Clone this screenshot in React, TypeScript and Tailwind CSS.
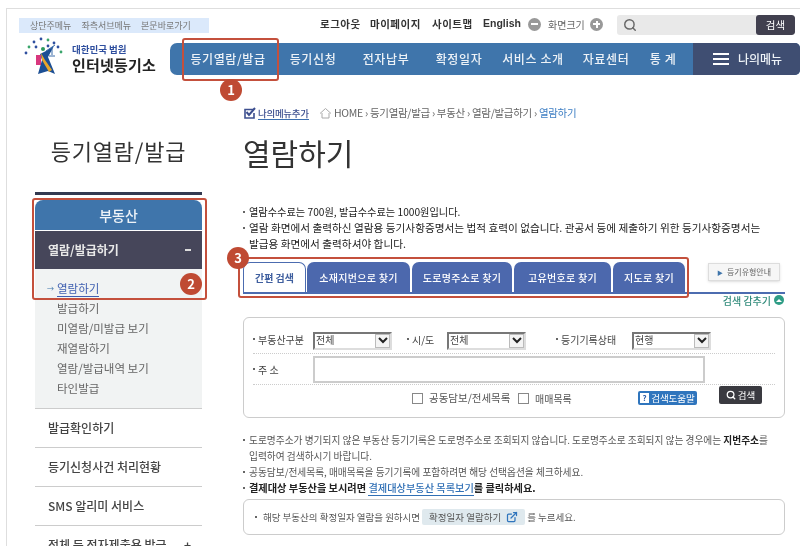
import React from "react";
import { Search, ExternalLink } from "lucide-react";

const F = '"Noto Sans CJK KR","Noto Sans",sans-serif';

function Logo() {
  return (
    <svg width="42" height="42" viewBox="0 0 42 42" className="shrink-0">
      {[[2,17],[5,11],[10,6],[17,3],[24,4],[30,7],[34,11],[37,16],[12,11],[24,10]].map(([x,y],i)=>(
        <circle key={i} cx={x} cy={y} r="1.4" fill={i%3===1?"#3aa56b":"#2f4f9f"} />
      ))}
      <path d="M14 38 L18 24 L16 18 L22 15 L30 10 L24 21 L31 38 L24 35 Z" fill="#1c4f94" />
      <path d="M17 17 L21 24 L28 34 L25 36 L18 24 Z" fill="#e8a62c" />
      <rect x="12" y="19" width="5" height="10" fill="#d8377e" />
      <circle cx="19" cy="13" r="2" fill="#2e9b5f" />
      <path d="M22 15 L31 9 M28 11 V19 M25 20 h6" stroke="#3a6aa8" strokeWidth="1" fill="none" />
    </svg>
  );
}

function Chevron() {
  return (
    <span className="flex h-[14px] w-[15px] items-center justify-center border border-[#bbb] bg-[#f4f4f4]">
      <svg width="10" height="7" viewBox="0 0 10 7"><path d="M1 1l4 4 4-4" stroke="#222" strokeWidth="2" fill="none" /></svg>
    </span>
  );
}

function Sel({ v }: { v: string }) {
  return (
    <div className="flex h-[18px] w-[79px] justify-between border-2 border-b-[#ddd] border-l-[#777] border-r-[#ddd] border-t-[#777] bg-white pl-[1px] text-[10px] leading-[12px] text-[#444]">
      <span>{v}</span>
      <Chevron />
    </div>
  );
}

const Label = ({ t, w }: { t: string; w: string }) => (
  <div className={`${w} flex items-center text-[10px] text-[#444]`}>
    <span className="mr-[3px] h-[2px] w-[2px] rounded-full bg-[#333]" />
    {t}
  </div>
);

const Badge = ({ n, c }: { n: string; c: string }) => (
  <div className={`absolute ${c} z-20 flex h-[22px] w-[22px] items-center justify-center rounded-full bg-[#bf4a33] text-[13px] font-bold text-white`}>{n}</div>
);

const Bullet = ({ children, className = "" }: { children: React.ReactNode; className?: string }) => (
  <div className={`flex ${className}`}>
    <span className="mr-[4px] mt-[7px] h-[2px] w-[2px] shrink-0 rounded-full bg-[#333]" />
    <div>{children}</div>
  </div>
);

export default function App() {
  const nav: [string, string][] = [
    ["등기열람/발급", "w-[92px]"],
    ["등기신청", "w-[78px]"],
    ["전자납부", "w-[68px]"],
    ["확정일자", "w-[78px]"],
    ["서비스 소개", "w-[70px]"],
    ["자료센터", "w-[76px]"],
    ["통 계", "w-[38px]"],
  ];
  const tabs: [string, string][] = [
    ["소재지번으로 찾기", "w-[103px] ml-[1px]"],
    ["도로명주소로 찾기", "w-[100px] ml-[2px]"],
    ["고유번호로 찾기", "w-[97px] ml-[2px]"],
    ["지도로 찾기", "w-[72px] ml-[2px]"],
  ];
  const sub = ["발급하기", "미열람/미발급 보기", "재열람하기", "열람/발급내역 보기", "타인발급"];
  const side = ["발급확인하기", "등기신청사건 처리현황", "SMS 알리미 서비스"];

  return (
    <div className="relative h-[546px] w-[800px] overflow-hidden bg-white blur-[0.5px]" style={{ fontFamily: F }}>
      <div className="ml-[6px] mt-[8px] h-[538px] border-l border-t border-[#dedede]">
        {/* top row */}
        <div className="flex h-[27px] items-start">
          <div className="ml-[12px] mt-[9px] flex h-[15px] w-[190px] items-center gap-[10px] bg-[#dbe9fb] pl-[11px] text-[9px] text-[#777]">
            <span>상단주메뉴</span><span>좌측서브메뉴</span><span>본문바로가기</span>
          </div>
          <div className="ml-[111px] mt-[7px] flex h-[16px] items-center text-[10.5px] font-bold text-[#333]">
            <span className="w-[50px] tracking-[0.5px]">로그아웃</span>
            <span className="w-[62px] tracking-[0.5px]">마이페이지</span>
            <span className="w-[51px] tracking-[0.5px]">사이트맵</span>
            <span className="w-[45px] text-[10.5px]" style={{ fontFamily: '"Liberation Sans",sans-serif' }}>English</span>
            <span className="flex h-[13px] w-[13px] items-center justify-center rounded-full bg-[#999]"><span className="h-[2px] w-[7px] bg-white" /></span>
            <span className="ml-[7px] w-[42px] text-[10px] font-normal text-[#666]">화면크기</span>
            <span className="relative flex h-[13px] w-[13px] items-center justify-center rounded-full bg-[#999]"><span className="h-[2px] w-[7px] bg-white" /><span className="absolute h-[7px] w-[2px] bg-white" /></span>
          </div>
          <div className="ml-[14px] mt-[6px] flex h-[20px] w-[178px] overflow-hidden rounded-[3px] bg-[#e9e9e9]">
            <div className="flex w-[139px] items-center pl-[6px]"><Search size={14} strokeWidth={2.5} className="text-[#666]" /></div>
            <div className="flex w-[39px] items-center justify-center rounded-[3px] bg-[#41404f] text-[10.5px] text-white">검색</div>
          </div>
        </div>

        {/* logo + nav */}
        <div className="flex h-[50px] items-start">
          <div className="ml-[17px] flex w-[146px] shrink-0">
            <Logo />
            <div className="ml-[6px] mt-[7px] flex flex-col whitespace-nowrap">
              <div className="text-[9.5px] font-bold leading-[12px] text-[#2f4f9f]">대한민국 법원</div>
              <div className="text-[15px] font-bold leading-[19px] tracking-[0.2px] text-[#222]">인터넷등기소</div>
            </div>
          </div>
          <div className="mt-[7px] flex h-[32px] w-[630px] shrink-0 overflow-hidden rounded-l-[7px] rounded-r-[5px] bg-[#3f75ab]">
            <div className="flex flex-1 items-center pl-[12px] text-[12px] font-medium tracking-[0.6px] text-[#edf2f7]">
              {nav.map(([t, w]) => (
                <span key={t} className={`${w} text-center`}>{t}</span>
              ))}
            </div>
            <div className="flex w-[107px] items-center bg-[#3f4e72] pl-[20px] text-[12px] font-medium text-[#edf2f7]">
              <span className="mr-[9px] flex w-[16px] flex-col gap-[3px]">
                <i className="h-[2px] bg-white" /><i className="h-[2px] bg-white" /><i className="h-[2px] bg-white" />
              </span>
              나의메뉴
            </div>
          </div>
        </div>

        <div className="flex">
          {/* sidebar */}
          <div className="ml-[28px] w-[167px] shrink-0">
            <div className="mt-[49px] text-center text-[22px] leading-[30px] tracking-[0.8px] text-[#333]">등기열람/발급</div>
            <div className="mt-[27px] h-[3px] bg-[#333a50]" />
            <div className="mt-[5px] flex h-[30px] items-center justify-center rounded-t-[8px] bg-[#3f75ab] text-[14px] font-medium text-[#eef3f8]">부동산</div>
            <div className="mt-[1px] flex h-[38px] items-center justify-between bg-[#46465a] pl-[13px] pr-[11px] text-[12px] font-bold text-[#e8e8e8]">
              <span>열람/발급하기</span>
              <span className="h-[1.5px] w-[6px] bg-[#ddd]" />
            </div>
            <div className="flex h-[139px] flex-col bg-[#f1f3f3] pl-[12px] pt-[9px] text-[11.5px] leading-[20px] text-[#666]">
              <div className="flex items-center">
                <span className="w-[10px] text-[7px] text-[#3f75ab]">→</span>
                <span className="border-b border-[#3f5fb0] leading-[16px] text-[#3f5fb0]">열람하기</span>
              </div>
              {sub.map((s) => (
                <div key={s} className="pl-[10px]">{s}</div>
              ))}
            </div>
            {side.map((s) => (
              <div key={s} className="flex h-[39px] items-center border-t border-[#ccc] pl-[13px] text-[12px] font-medium text-[#444]">{s}</div>
            ))}
            <div className="flex h-[39px] items-center justify-between border-t border-[#ccc] pl-[13px] pr-[11px] text-[12px] font-medium text-[#444]">
              <span>전체 등 전자제출용 발급</span><span className="text-[12px] font-bold">+</span>
            </div>
          </div>

          {/* main */}
          <div className="ml-[41px] w-[542px] shrink-0">
            <div className="mt-[19px] flex h-[16px] items-center text-[10.5px] tracking-[-0.3px] text-[#666]">
              <svg width="14" height="14" viewBox="0 0 14 14" className="mr-[1px]">
                <path d="M11 3.5H2v8.5h9V7" stroke="#3d4f8f" strokeWidth="1.6" fill="none" />
                <path d="M3.5 6l2.5 3 6-7" stroke="#3d4f8f" strokeWidth="2" fill="none" />
              </svg>
              <span className="w-[51px] whitespace-nowrap border-b border-[#3d6fb0] text-[9.5px] font-medium leading-[12px] text-[#3d4f8f]">나의메뉴추가</span>
              <svg width="13" height="12" viewBox="0 0 13 12" className="ml-[10px] mr-[2px]"><path d="M1 6.5L6.5 1.5 12 6.5M3 6v5h7V6" stroke="#aaa" strokeWidth="1" fill="none" /></svg>
              <span>HOME › 등기열람/발급 › 부동산 › 열람/발급하기 › <span className="text-[#3f7fc4]">열람하기</span></span>
            </div>
            <h1 className="mt-[13px] text-[30px] font-normal leading-[36px] text-[#333]">열람하기</h1>
            <div className="mt-[34px] text-[10.65px] leading-[16px] text-[#222]">
              <Bullet className="text-[10.2px]">열람수수료는 700원, 발급수수료는 1000원입니다.</Bullet>
              <Bullet>열람 화면에서 출력하신 열람용 등기사항증명서는 법적 효력이 없습니다. 관공서 등에 제출하기 위한 등기사항증명서는<br />발급용 화면에서 출력하셔야 합니다.</Bullet>
            </div>

            {/* tabs */}
            <div className="mt-[10px] flex h-[32px] items-end border-b-2 border-[#4c6cb0]">
              <div className="flex h-[30px] w-[63px] items-center justify-center rounded-t-[7px] border-x border-t border-[#4c6cb0] bg-white text-[10px] font-bold text-[#3f5f9f]">간편 검색</div>
              {tabs.map(([t, w]) => (
                <div key={t} className={`${w} flex h-[30px] items-center justify-center rounded-t-[7px] bg-[#4c68ad] text-[10px] font-medium tracking-[0.3px] text-white`}>{t}</div>
              ))}
              <div className="mb-[11px] ml-[23px] flex h-[18px] w-[72px] items-center justify-center gap-[4px] border border-[#ddd] bg-[#f6f6f6] text-[8px] text-[#666] shadow-sm">
                <span className="text-[6px] text-[#3f75ab]">▶</span>등기유형안내
              </div>
            </div>
            <div className="flex h-[12px] items-center justify-end gap-[3px] pr-[1px] text-[10px] font-medium text-[#2f8a7a]">
              검색 감추기
              <span className="flex h-[10px] w-[10px] items-center justify-center rounded-full bg-[#2f9d86]"><span className="h-0 w-0 border-x-[3px] border-b-[3px] border-x-transparent border-b-white" /></span>
            </div>

            {/* form */}
            <div className="mt-[11px] h-[101px] rounded-[6px] border border-[#ccc] px-[9px]">
              <div className="flex h-[36px] items-center border-b border-dotted border-[#ccc] pt-[10px]">
                <Label t="부동산구분" w="w-[60px] mb-[3px]" />
                <Sel v="전체" />
                <div className="w-[15px]" />
                <Label t="시/도" w="w-[40px] mb-[3px]" />
                <Sel v="전체" />
                <div className="w-[30px]" />
                <Label t="등기기록상태" w="w-[76px] mb-[3px]" />
                <Sel v="현행" />
              </div>
              <div className="flex h-[31px] items-center border-b border-dotted border-[#ccc]">
                <Label t="주 소" w="w-[60px]" />
                <div className="h-[27px] w-[392px] border-2 border-[#ccc] bg-white" />
              </div>
              <div className="flex h-[30px] items-center pb-[4px] text-[10px] text-[#555]">
                <span className="ml-[159px] h-[11px] w-[11px] border border-[#888] bg-white" />
                <span className="ml-[6px] w-[83px] text-[10.5px]">공동담보/전세목록</span>
                <span className="ml-[6px] h-[11px] w-[11px] border border-[#888] bg-white" />
                <span className="ml-[6px] w-[40px]">매매목록</span>
                <div className="ml-[63px] flex h-[14px] w-[59px] items-center justify-center gap-[2px] rounded-[2px] bg-[#2f75bd] text-[9.5px] text-white">
                  <span className="flex h-[10px] w-[9px] items-center justify-center bg-white text-[8px] font-bold leading-none text-[#2f5fa8]">?</span>검색도움말
                </div>
                <div className="mb-[6px] ml-[22px] flex h-[18px] w-[43px] items-center justify-center gap-[2px] rounded-[2px] bg-[#3a3a40] text-[9.5px] text-white">
                  <Search size={10} strokeWidth={3} />검색
                </div>
              </div>
            </div>

            {/* notes */}
            <div className="mt-[14px] text-[9.7px] leading-[16px] text-[#555]">
              <Bullet>도로명주소가 병기되지 않은 부동산 등기기록은 도로명주소로 조회되지 않습니다. 도로명주소로 조회되지 않는 경우에는 <b className="text-[#222]">지번주소</b>를<br />입력하여 검색하시기 바랍니다.</Bullet>
              <Bullet>공동담보/전세목록, 매매목록을 등기기록에 포함하려면 해당 선택옵션을 체크하세요.</Bullet>
              <Bullet className="text-[10.2px] font-bold text-[#222]"><span>결제대상 부동산을 보시려면 <span className="border-b border-[#2f6fb5] font-medium text-[#2f6fb5]">결제대상부동산 목록보기</span>를 클릭하세요.</span></Bullet>
            </div>
            <div className="mt-[3px] flex h-[36px] items-center rounded-[6px] border border-[#ccc] pl-[11px] text-[9.5px] text-[#555]">
              <span className="mr-[6px] h-[2px] w-[2px] rounded-full bg-[#333]" />
              해당 부동산의 확정일자 열람을 원하시면
              <span className="mx-[2px] flex h-[16px] items-center gap-[5px] rounded-[2px] bg-[#dfe9ee] px-[7px]">확정일자 열람하기 <ExternalLink size={12} strokeWidth={2.5} className="text-[#2f75bd]" /></span>
              를 누르세요.
            </div>
          </div>
        </div>
      </div>

      {/* annotations */}
      <div className="absolute left-[182px] top-[38px] z-10 h-[43px] w-[97px] rounded-[3px] border-2 border-[#c4503c]" />
      <Badge n="1" c="left-[220px] top-[79px]" />
      <div className="absolute left-[32px] top-[198px] z-10 h-[102px] w-[175px] rounded-[3px] border-2 border-[#c4503c]" />
      <Badge n="2" c="left-[180px] top-[273px]" />
      <div className="absolute left-[238px] top-[257px] z-10 h-[41px] w-[451px] rounded-[3px] border-2 border-[#c4503c]" />
      <Badge n="3" c="left-[227px] top-[247px]" />
    </div>
  );
}
